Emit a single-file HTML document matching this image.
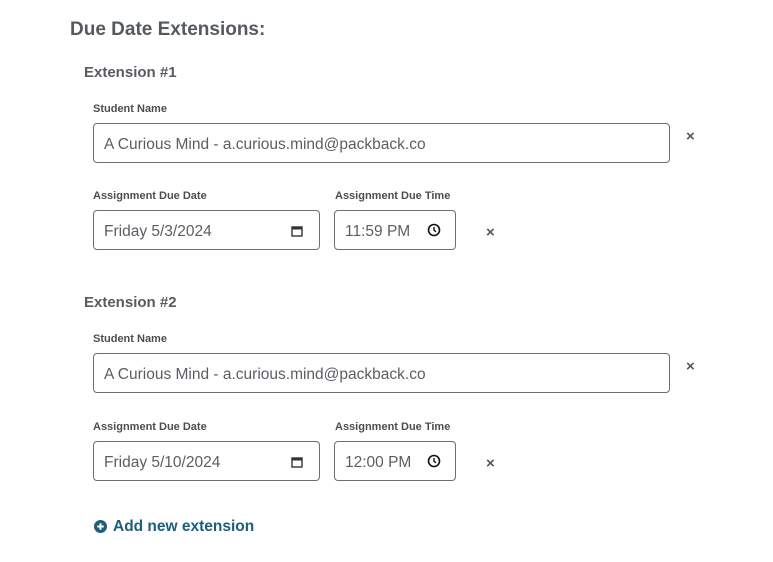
<!DOCTYPE html>
<html><head><style>
body{margin:0;width:773px;height:562px;background:#fff;font-family:"Liberation Sans",sans-serif;color:#585c61;position:relative;overflow:hidden}
.a{position:absolute;white-space:nowrap}
h1{position:absolute;left:70px;top:19px;margin:0;font-size:19px;font-weight:bold;color:#555a60}
.ext{font-size:15px;font-weight:bold;left:84px}
.lbl{font-size:11px;font-weight:bold;left:93px;color:#4a4e53}
.box{position:absolute;border:1px solid #6b6f74;border-radius:4px;box-sizing:border-box;font-size:15.5px;color:#5a5e63;padding-left:10px;line-height:41px;height:40px}
.x{font-size:15px;font-weight:bold;color:#555}
svg{position:absolute}
</style></head><body>
<h1>Due Date Extensions:</h1>

<div class="a ext" style="top:64px">Extension #1</div>
<div class="a lbl" style="top:103px">Student Name</div>
<div class="box" style="left:93px;top:123px;width:577px">A Curious Mind - a.curious.mind@packback.co</div>
<div class="a x" style="left:686px;top:128px">×</div>
<div class="a lbl" style="top:190px">Assignment Due Date</div>
<div class="a lbl" style="top:190px;left:335px">Assignment Due Time</div>
<div class="box" style="left:93px;top:210px;width:227px">Friday 5/3/2024
<svg style="right:16px;top:14px" width="12" height="12" viewBox="0 0 12 12"><rect x="1" y="2" width="10" height="9" fill="none" stroke="#333" stroke-width="1.4"/><rect x="1" y="2" width="10" height="2.5" fill="#333"/></svg></div>
<div class="box" style="left:334px;top:210px;width:122px">11:59 PM
<svg style="right:14px;top:12px" width="14" height="14" viewBox="0 0 14 14"><circle cx="7" cy="7" r="5.5" fill="none" stroke="#111" stroke-width="1.6"/><path d="M7 4v3.2l2 1.6" fill="none" stroke="#111" stroke-width="1.4"/></svg></div>
<div class="a x" style="left:486px;top:224px">×</div>

<div class="a ext" style="top:294px">Extension #2</div>
<div class="a lbl" style="top:333px">Student Name</div>
<div class="box" style="left:93px;top:353px;width:577px">A Curious Mind - a.curious.mind@packback.co</div>
<div class="a x" style="left:686px;top:358px">×</div>
<div class="a lbl" style="top:421px">Assignment Due Date</div>
<div class="a lbl" style="top:421px;left:335px">Assignment Due Time</div>
<div class="box" style="left:93px;top:441px;width:227px">Friday 5/10/2024
<svg style="right:16px;top:14px" width="12" height="12" viewBox="0 0 12 12"><rect x="1" y="2" width="10" height="9" fill="none" stroke="#333" stroke-width="1.4"/><rect x="1" y="2" width="10" height="2.5" fill="#333"/></svg></div>
<div class="box" style="left:334px;top:441px;width:122px">12:00 PM
<svg style="right:14px;top:12px" width="14" height="14" viewBox="0 0 14 14"><circle cx="7" cy="7" r="5.5" fill="none" stroke="#111" stroke-width="1.6"/><path d="M7 4v3.2l2 1.6" fill="none" stroke="#111" stroke-width="1.4"/></svg></div>
<div class="a x" style="left:486px;top:455px">×</div>

<svg style="left:94px;top:520px" width="13" height="13" viewBox="0 0 13 13"><circle cx="6.5" cy="6.5" r="6.5" fill="#1d5d7e"/><path d="M6.5 3.3v6.4M3.3 6.5h6.4" stroke="#fff" stroke-width="2"/></svg>
<div class="a" style="left:113px;top:518px;font-size:15.5px;font-weight:bold;color:#1d5d7e">Add new extension</div>
</body></html>
